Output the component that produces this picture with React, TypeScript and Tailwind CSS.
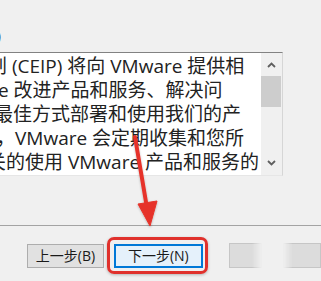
import React from "react";

const lines = [
  { ml: "ml-[8px]", text: "划 (CEIP) 将向 VMware 提供相" },
  { ml: "ml-[18px]", text: "e 改进产品和服务、解决问" },
  { ml: "ml-[14px]", text: "最佳方式部署和使用我们的产" },
  { ml: "ml-[16px]", text: "，VMware 会定期收集和您所" },
  { ml: "ml-[7px]", text: "关的使用 VMware 产品和服务的" },
];

const Chevron: React.FC<{ down?: boolean }> = ({ down }) => (
  <svg width="9" height="6" viewBox="0 0 9 6" className="block">
    <path
      d={down ? "M1 1 L4.5 4.5 L8 1" : "M1 5 L4.5 1.5 L8 5"}
      fill="none"
      stroke="#5f5f5f"
      strokeWidth="1.8"
    />
  </svg>
);

export default function App() {
  return (
    <div className="relative w-[321px] h-[281px] overflow-hidden bg-[#f0f0f0] font-['Open_Sans','Noto_Sans_CJK_SC',sans-serif] text-[#222222]">
      {/* label above the text box */}
      <div className="h-[52px] pt-[26px] text-[17px] leading-[20px]">
        <span className="inline-block -ml-[4px]">)</span>
      </div>

      {/* text box */}
      <div className="flex w-[303px] h-[124px] -ml-[20px] bg-white border-t border-t-[#828282] border-r border-r-[#d6d6d6] border-b border-b-[#e6e6e6]">
        <div className="flex-1 overflow-hidden pt-[1px] text-[19px] leading-[24px] whitespace-nowrap">
          {lines.map((l, i) => (
            <div key={i} className={l.ml}>
              {l.text}
            </div>
          ))}
        </div>
        <div className="w-[21px] flex flex-col bg-[#f0f0f0]">
          <div className="h-[23px] flex items-center justify-center">
            <Chevron />
          </div>
          <div className="h-[31px] mr-[1px] bg-[#cdcdcd]" />
          <div className="flex-1" />
          <div className="h-[24px] flex items-center justify-center">
            <Chevron down />
          </div>
        </div>
      </div>

      {/* separator */}
      <div className="mt-[49px] h-px bg-[#a3a3a3]" />

      {/* buttons */}
      <div className="flex items-center mt-[17px] pl-[27px] text-[14px] leading-[16px] text-[#1a1a1a]">
        <button className="w-[80px] h-[24px] bg-[#e1e1e1] border border-[#adadad] flex items-center justify-center">
          上一步(B)
        </button>
        <div className="relative ml-[10px]">
          <button className="w-[89px] h-[24px] bg-[#e5f1fb] border-2 border-[#0078d7] flex items-center justify-center">
            下一步(N)
          </button>
          <div className="absolute -left-[7px] -right-[5px] -top-[7px] -bottom-[6px] border-[3px] border-[#e0312c] rounded-[7px] shadow-[0_1px_3px_rgba(0,0,0,0.25)]" />
        </div>
        <div className="ml-[26px] w-[34px] h-[25px] bg-[#dcdcdc] border border-[#c6c6c6] [mask-image:linear-gradient(to_right,black_70%,transparent)]" />
        <div className="ml-[21px] w-[40px] h-[25px] bg-[#dcdcdc] border border-[#c6c6c6] [mask-image:linear-gradient(to_left,black_75%,transparent)]" />
      </div>

      {/* red annotation arrow */}
      <svg className="absolute inset-0 pointer-events-none" width="321" height="281" viewBox="0 0 321 281">
        <defs>
          <filter id="sh" x="-20%" y="-20%" width="140%" height="140%">
            <feDropShadow dx="0" dy="1" stdDeviation="1" floodColor="#000" floodOpacity="0.25" />
          </filter>
        </defs>
        <g filter="url(#sh)" fill="#e6332a" stroke="#e6332a">
          <line x1="135" y1="137" x2="147" y2="208" strokeWidth="4" strokeLinecap="round" />
          <polygon points="138,204 157,201 150,226" strokeWidth="1" strokeLinejoin="round" />
        </g>
      </svg>
    </div>
  );
}
